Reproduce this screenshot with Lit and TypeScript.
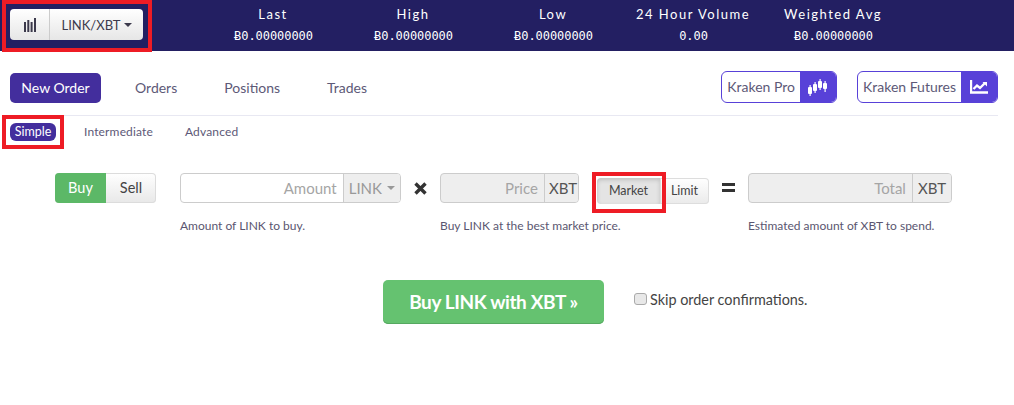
import { LitElement, html, css } from "lit";
import { customElement } from "lit/decorators.js";

const stats = [
  ["Last", "Ƀ0.00000000"],
  ["High", "Ƀ0.00000000"],
  ["Low", "Ƀ0.00000000"],
  ["24 Hour Volume", "0.00"],
  ["Weighted Avg", "Ƀ0.00000000"],
];

@customElement("app-root")
export class AppRoot extends LitElement {
  static styles = css`
    :host {
      display: block;
      position: relative;
      width: 1014px;
      height: 405px;
      overflow: hidden;
      background: #fff;
      font-family: Lato, "Noto Sans", sans-serif;
      color: #4f4a66;
    }
    .top {
      height: 51px;
      background: #231f62;
      display: flex;
      align-items: flex-start;
      padding: 9px 0 0 10px;
      box-sizing: border-box;
    }
    .pair {
      display: flex;
      width: 133px;
      height: 31px;
      border-radius: 4px;
      background: linear-gradient(#fff, #e6e6e6);
      color: #3c3a4c;
      font-size: 13px;
      align-items: center;
      margin-right: 60px;
    }
    .pair .ic {
      width: 39px;
      height: 100%;
      border-right: 1px solid #ccc;
      display: flex;
      align-items: center;
      justify-content: center;
    }
    .pair .nm {
      flex: 1;
      display: flex;
      align-items: center;
      justify-content: center;
      gap: 3px;
    }
    .caret {
      width: 0;
      height: 0;
      border-left: 4px solid transparent;
      border-right: 4px solid transparent;
      border-top: 4px solid currentColor;
    }
    .stats {
      display: flex;
      color: #fff;
      text-align: center;
    }
    .stat {
      width: 140px;
      font-size: 13px;
      letter-spacing: 1.5px;
      line-height: 20px;
      margin-top: -5px;
    }
    .stat .v {
      font-family: "DejaVu Sans Mono", "Liberation Mono", monospace;
      font-size: 12px;
      letter-spacing: -0.05px;
      line-height: 24px;
      padding-left: 1px;
    }
    .main {
      padding: 20px 16px 0 10px;
    }
    .tabs {
      display: flex;
      align-items: flex-start;
      height: 44px;
      border-bottom: 1px solid #e8e8f2;
      font-size: 14px;
    }
    .tab {
      height: 30px;
      margin-top: 2px;
      line-height: 30px;
      margin-right: 47px;
      color: #5d5977;
    }
    .tab.on {
      width: 91px;
      text-align: center;
      background: #432e9d;
      color: #fff;
      border-radius: 5px;
      margin-right: 34px;
    }
    .spacer {
      flex: 1;
    }
    .ext {
      display: flex;
      height: 32px;
      box-sizing: border-box;
      border: 1px solid #5841d8;
      border-radius: 6px;
      overflow: hidden;
      margin-left: 20px;
      font-size: 14px;
      line-height: 30px;
      color: #5d5977;
    }
    .ext span {
      padding: 0 5px;
    }
    .ext .box {
      width: 36px;
      background: #5841d8;
      display: flex;
      align-items: center;
      justify-content: center;
    }
    .subs {
      display: flex;
      align-items: flex-start;
      font-size: 12px;
      height: 18px;
      margin-top: 7px;
      line-height: 17px;
      letter-spacing: 0.15px;
      color: #5d5977;
    }
    .subs .on {
      width: 46px;
      height: 18px;
      background: #432e9d;
      color: #fff;
      border-radius: 6px;
      text-align: center;
      margin-right: 28px;
      font-size: 12.5px;
      letter-spacing: 0;
    }
    .subs .o {
      margin-right: 32px;
    }
    .form {
      display: grid;
      grid-template-columns: 125px 221px 39px 139px 130px 39px 204px;
      margin: 32px 0 0 45px;
      row-gap: 15px;
    }
    .seg {
      display: flex;
      width: 101px;
      height: 30px;
      border-radius: 4px;
      overflow: hidden;
      box-shadow: 0 0 0 1px #dcdcdc inset;
      font-size: 14.5px;
      line-height: 30px;
      text-align: center;
      background: linear-gradient(#fff, #e8e8e8);
      color: #444;
    }
    .seg .buy {
      width: 51px;
      background: #5cb867;
      color: #fff;
    }
    .seg .sell {
      flex: 1;
    }
    .inp {
      display: flex;
      height: 30px;
      box-sizing: border-box;
      border: 1px solid #ccc;
      border-radius: 4px;
      overflow: hidden;
      font-size: 15px;
      line-height: 28px;
    }
    .inp .f {
      flex: 1;
      text-align: right;
      padding-right: 6px;
      color: #a5a5a5;
    }
    .inp.ro {
      background: #eee;
    }
    .inp .ad {
      border-left: 1px solid #ccc;
      padding: 0 1px 0 4px;
      color: #555;
      background: #eee;
      display: flex;
      align-items: center;
      gap: 5px;
    }
    .inp .ad.wide {
      padding: 0 5px;
    }
    .inp .ad.dim {
      color: #999;
      padding: 0 5px;
    }
    .sign {
      display: flex;
      align-items: center;
      justify-content: center;
      padding-right: 1px;
      height: 30px;
    }
    .mode {
      display: flex;
      align-items: flex-end;
      height: 31px;
      padding-left: 18px;
      font-size: 12.5px;
      color: #444;
    }
    .mode div {
      height: 26px;
      line-height: 26px;
      text-align: center;
      border-radius: 0 4px 4px 0;
      box-sizing: border-box;
    }
    .mode .m {
      width: 63px;
      background: #e4e4e4;
      border-radius: 4px 0 0 4px;
      box-shadow: inset 0 2px 4px rgba(0, 0, 0, 0.16);
    }
    .mode .l {
      width: 49px;
      background: linear-gradient(#fff, #eaeaea);
      box-shadow: inset 0 0 0 1px #ddd;
    }
    .help {
      font-size: 12px;
      line-height: 14px;
      color: #5a5670;
    }
    .help.wide {
      grid-column: 4 / 7;
    }
    .bottom {
      display: flex;
      align-items: flex-start;
      margin: 47px 0 0 373px;
    }
    .cta {
      width: 221px;
      height: 44px;
      line-height: 43px;
      background: #65c270;
      color: #fff;
      font-weight: 700;
      font-size: 19px;
      letter-spacing: -0.4px;
      text-align: center;
      border-radius: 5px;
      box-shadow: inset 0 -1px 0 #55a860;
    }
    .skip {
      display: flex;
      align-items: flex-start;
      margin: 13px 0 0 30px;
      font-size: 14.4px;
      line-height: 14px;
      color: #444;
    }
    .cb {
      width: 13px;
      height: 12px;
      box-sizing: border-box;
      border: 1px solid #aaa;
      border-radius: 3px;
      background: #e8e8e8;
      margin-right: 3px;
    }
    .mark {
      position: absolute;
      box-sizing: border-box;
      border: 4px solid #ee1c25;
      pointer-events: none;
    }
    .m1 { left: 2px; top: 0; width: 150px; height: 52px; }
    .m2 { left: 2px; top: 115px; width: 62px; height: 34px; }
    .m3 { left: 592px; top: 172px; width: 74px; height: 41px; }
  `;

  render() {
    return html`
      <div class="top">
        <div class="pair">
          <div class="ic">
            <svg width="12" height="14" viewBox="0 0 12 14" fill="#3c3a4c">
              <rect x="0" y="4" width="2" height="10"></rect>
              <rect x="3.3" y="2" width="2" height="12"></rect>
              <rect x="6.6" y="4" width="2" height="10"></rect>
              <rect x="10" y="0" width="2" height="14"></rect>
            </svg>
          </div>
          <div class="nm">LINK/XBT <i class="caret"></i></div>
        </div>
        <div class="stats">
          ${stats.map(
            ([l, v]) => html`<div class="stat"><div>${l}</div><div class="v">${v}</div></div>`
          )}
        </div>
      </div>
      <div class="main">
        <div class="tabs">
          <div class="tab on">New Order</div>
          <div class="tab">Orders</div>
          <div class="tab">Positions</div>
          <div class="tab">Trades</div>
          <div class="spacer"></div>
          <div class="ext">
            <span>Kraken Pro</span>
            <div class="box">
              <svg width="19" height="17" viewBox="0 0 19 17" fill="#fff">
                <rect x="0" y="8" width="4" height="7" rx="1"></rect>
                <rect x="1.5" y="6" width="1.2" height="11"></rect>
                <rect x="5" y="5" width="4" height="7" rx="1"></rect>
                <rect x="6.5" y="3" width="1.2" height="11"></rect>
                <rect x="10" y="2" width="4" height="7" rx="1"></rect>
                <rect x="11.5" y="0" width="1.2" height="11"></rect>
                <rect x="15" y="4" width="4" height="6" rx="1"></rect>
                <rect x="16.5" y="2" width="1.2" height="11"></rect>
              </svg>
            </div>
          </div>
          <div class="ext">
            <span>Kraken Futures</span>
            <div class="box">
              <svg width="18" height="14" viewBox="0 0 18 14" fill="none" stroke="#fff">
                <path d="M1 0v12.5h17" stroke-width="2.4"></path>
                <path d="M3.5 9l3.5-3.5 3 2.5 5-5" stroke-width="2.4"></path>
                <path d="M12.5 2h4.5v4.5z" fill="#fff" stroke="none"></path>
              </svg>
            </div>
          </div>
        </div>
        <div class="subs">
          <div class="on">Simple</div>
          <div class="o">Intermediate</div>
          <div class="o">Advanced</div>
        </div>
        <div class="form">
          <div class="seg"><div class="buy">Buy</div><div class="sell">Sell</div></div>
          <div class="inp">
            <div class="f">Amount</div>
            <div class="ad dim">LINK <i class="caret"></i></div>
          </div>
          <div class="sign">
            <svg width="13" height="13" viewBox="0 0 13 13" stroke="#333" stroke-width="3.4">
              <path d="M1.5 1.5l10 10M11.5 1.5l-10 10"></path>
            </svg>
          </div>
          <div class="inp ro">
            <div class="f">Price</div>
            <div class="ad">XBT</div>
          </div>
          <div class="mode"><div class="m">Market</div><div class="l">Limit</div></div>
          <div class="sign">
            <svg width="13" height="10" viewBox="0 0 13 10" fill="#333">
              <rect width="13" height="3"></rect><rect y="6" width="13" height="3"></rect>
            </svg>
          </div>
          <div class="inp ro">
            <div class="f">Total</div>
            <div class="ad wide">XBT</div>
          </div>
          <div></div>
          <div class="help">Amount of LINK to buy.</div>
          <div></div>
          <div class="help wide">Buy LINK at the best market price.</div>
          <div class="help">Estimated amount of XBT to spend.</div>
        </div>
        <div class="bottom">
          <div class="cta">Buy LINK with XBT »</div>
          <div class="skip"><div class="cb"></div>Skip order confirmations.</div>
        </div>
      </div>
      <div class="mark m1"></div>
      <div class="mark m2"></div>
      <div class="mark m3"></div>
    `;
  }
}
